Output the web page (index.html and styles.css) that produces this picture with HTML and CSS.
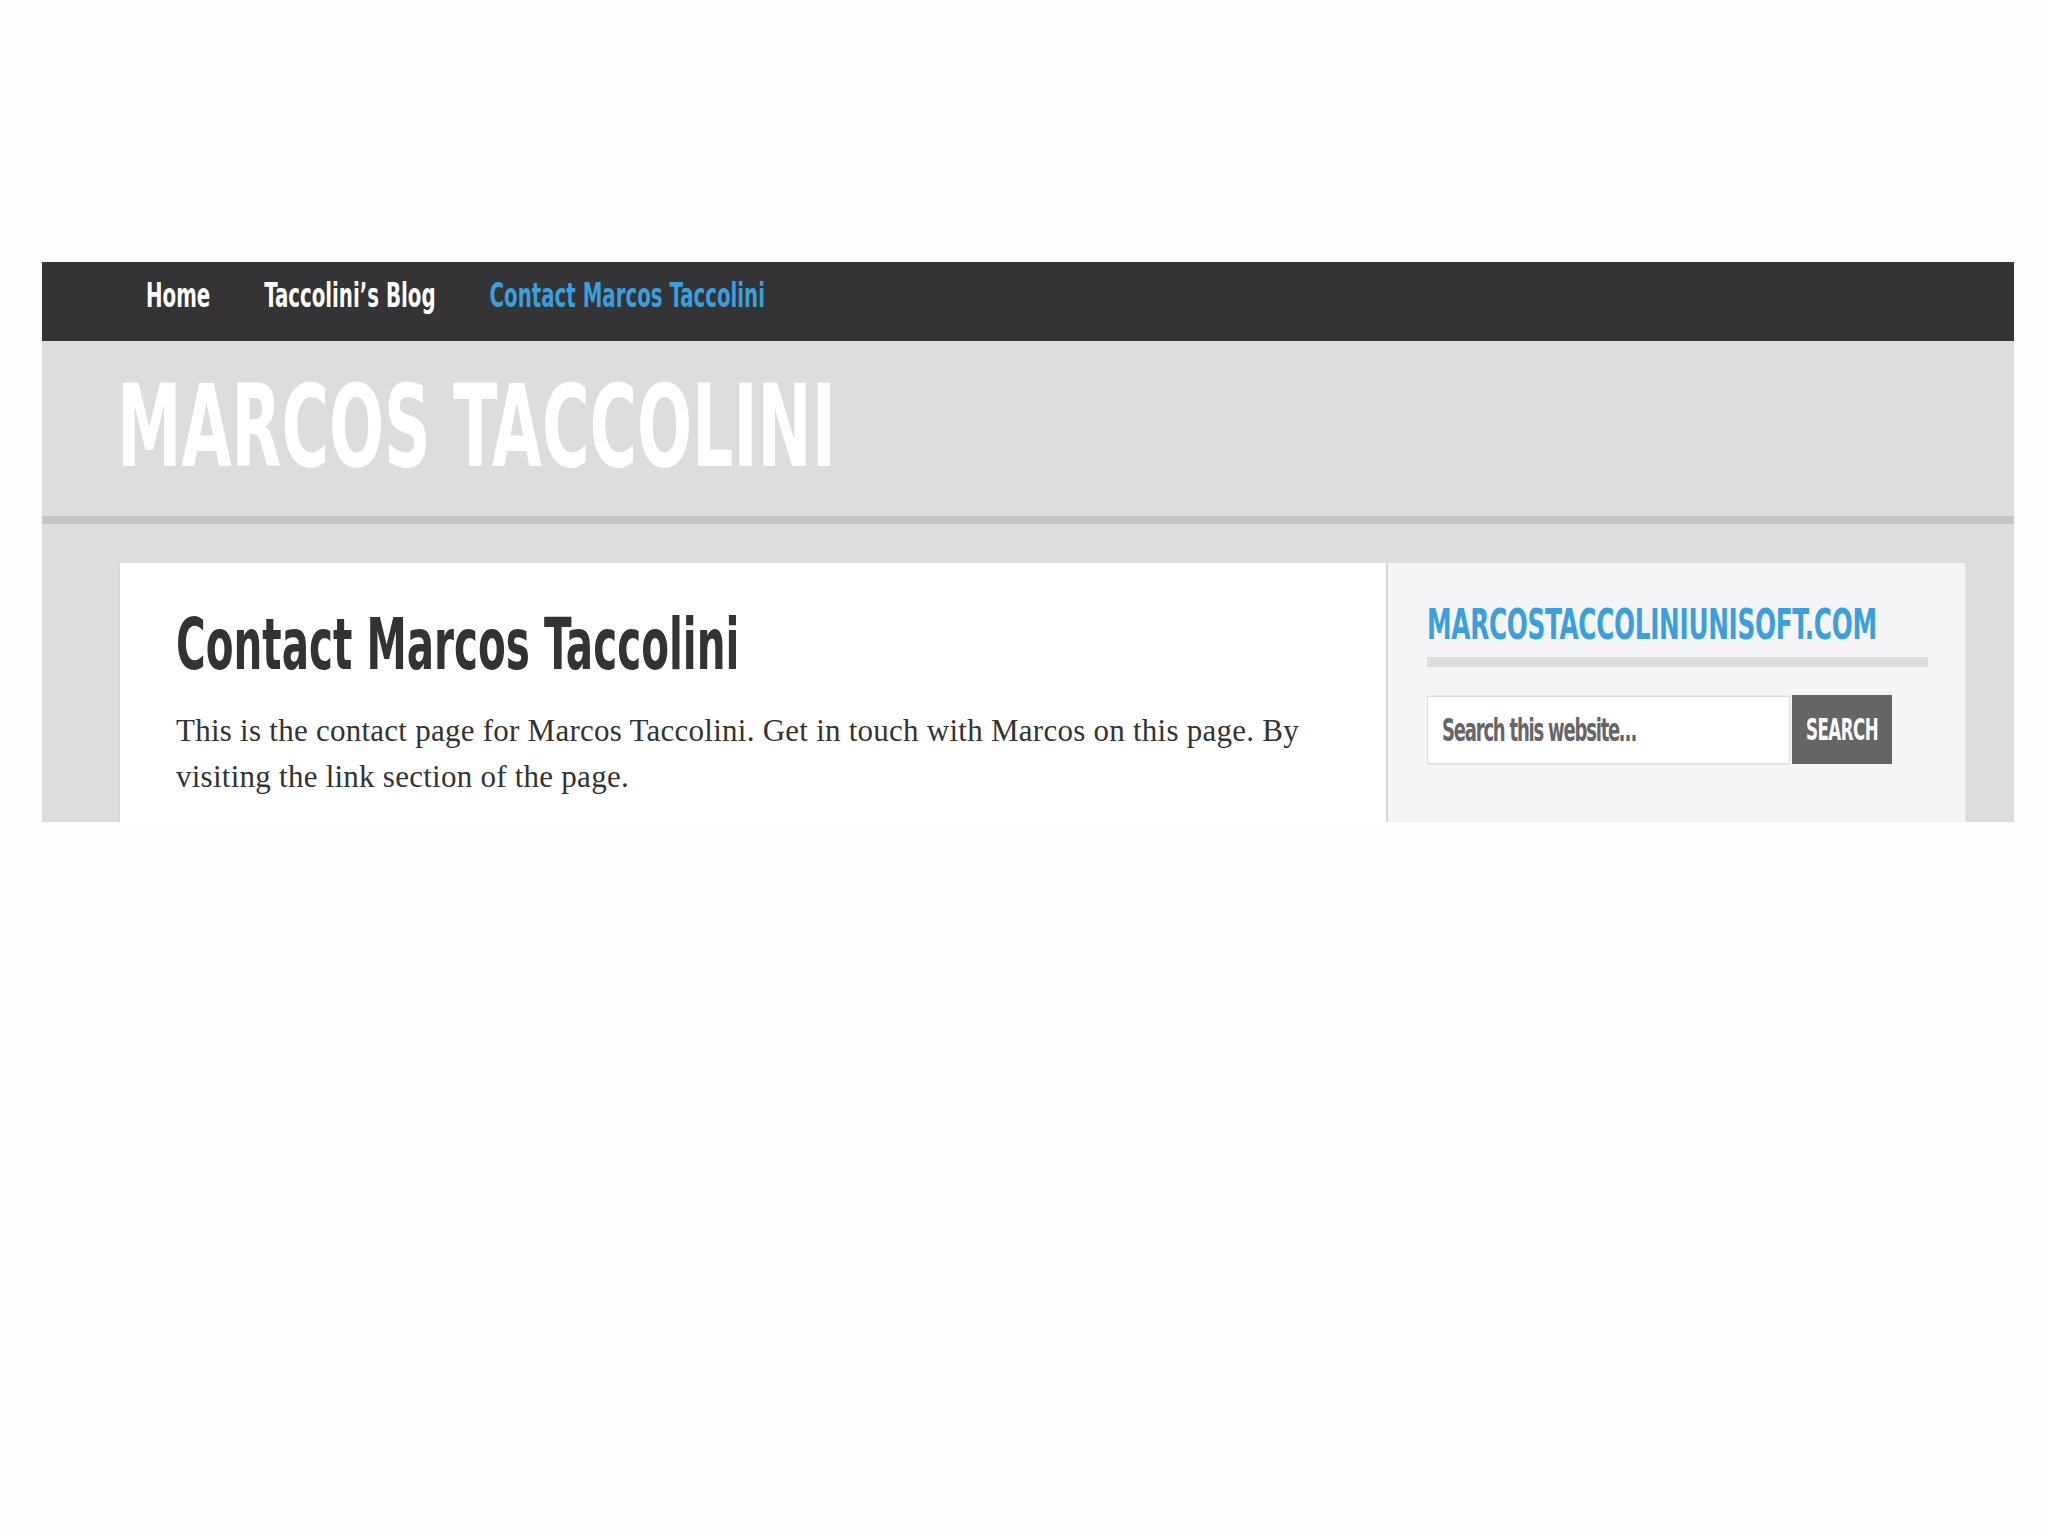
FILE: index.html
```html
<!DOCTYPE html>
<html lang="en">
<head>
    <meta charset="UTF-8">
    <meta name="viewport" content="width=device-width, initial-scale=1.0">
    <title>Contact Marcos Taccolini</title>
    <link rel="stylesheet" href="styles.css">
</head>
<body>
    <div class="site">
        <!-- Primary navigation -->
        <nav class="nav-primary">
            <ul class="menu">
                <li><a href="#"><span>Home</span></a></li>
                <li><a href="#"><span>Taccolini’s Blog</span></a></li>
                <li class="current"><a href="#"><span>Contact Marcos Taccolini</span></a></li>
            </ul>
        </nav>

        <header class="site-header">
            <p class="site-title"><a href="#">Marcos Taccolini</a></p>
        </header>

        <div class="site-inner">
            <main class="content">
                <article class="entry">
                    <h1 class="entry-title"><span>Contact Marcos Taccolini</span></h1>
                    <p>This is the contact page for Marcos Taccolini. Get in touch with Marcos on this page. By visiting the link section of the page.</p>
                </article>
            </main>

            <!-- Sidebar -->
            <aside class="sidebar">
                <section class="widget">
                    <h4 class="widget-title"><span>marcostaccoliniunisoft.com</span></h4>
                    <form class="search-form" onsubmit="return false;">
                        <input type="search" placeholder="Search this website…">
                        <button type="submit"><span>Search</span></button>
                    </form>
                </section>
            </aside>
        </div>
    </div>
</body>
</html>
```

FILE: styles.css
```css
/* Main Styles */
body {
    background-color: #fefefe;
    color: #333;
    font-family: "Liberation Serif", "Times New Roman", serif;
    margin: 0;
}
a {
    color: inherit;
    text-decoration: none;
}
.site {
    margin: 262px 34px 0 42px;
    height: 560px;
    overflow: hidden;
    background-color: #dddcdf;
}

/* Headline font: condensed sans stretched tall */
.menu a span, .site-title a, .entry-title span, .widget-title span, .search-form button span {
    display: inline-block;
    font-family: "Liberation Sans Narrow", "DejaVu Sans Condensed", "Liberation Sans", sans-serif;
    font-weight: bold;
    transform: scaleY(1.56);
}

/* Navigation */
.nav-primary {
    background-color: #343335;
    height: 79px;
    box-sizing: border-box;
    padding: 0 0 12px 104px;
    display: flex;
    align-items: center;
}
.menu {
    list-style: none;
    margin: 0;
    padding: 0;
    display: flex;
    gap: 54px;
}
.menu a {
    color: #fff;
    font-size: 22px;
    line-height: 22px;
}
.menu .current a {
    color: #3a9fdc;
}

/* Header */
.site-header {
    height: 183px;
    box-sizing: border-box;
    padding: 0 0 4px 75px;
    display: flex;
    align-items: center;
    border-bottom: 8px solid #c4c3c6;
}
.site-title {
    margin: 0;
    font-size: 72px;
    line-height: 72px;
    text-transform: uppercase;
}
.site-title a {
    color: #fff;
    transform: scaleY(1.58);
}

/* Content */
.site-inner {
    display: flex;
    padding: 39px 48px 0 77px;
    height: 100%;
}
.content {
    flex: 1;
    background-color: #fff;
    border-left: 1px solid #d4d3d6;
    padding: 53px 60px 0 56px;
}
.entry-title {
    margin: 0 0 34px;
    font-size: 45px;
    line-height: 57px;
    color: #333;
    font-weight: bold;
}
.entry-title span {
    transform: scaleY(1.58);
}
.entry p {
    margin: 0;
    font-size: 31px;
    line-height: 46px;
    letter-spacing: 0.25px;
    color: #333;
}

/* Sidebar */
.sidebar {
    flex: 0 0 580px;
    box-sizing: border-box;
    background-color: #f5f5f7;
    border-left: 2px solid #d6d5d8;
    border-right: 1px solid #e2e1e4;
    padding: 44px 37px 0 39px;
}
.widget-title {
    margin: 0 0 28px;
    padding-bottom: 17px;
    border-bottom: 10px solid #dddcdf;
    font-size: 27.5px;
    line-height: 32px;
    color: #3a9fdc;
    text-transform: uppercase;
}
.widget-title span {
    transform: scaleY(1.56);
    letter-spacing: -0.3px;
}
.search-form {
    display: flex;
    align-items: center;
    gap: 2px;
    height: 69px;
}
.search-form input {
    width: 363px;
    height: 44px;
    box-sizing: border-box;
    border: 1px solid #dddcdf;
    background-color: #fff;
    padding: 0 14px;
    font-family: "Liberation Sans Narrow", "DejaVu Sans Condensed", "Liberation Sans", sans-serif;
    font-weight: bold;
    font-size: 20px;
    letter-spacing: -1.2px;
    color: #666;
    transform: scaleY(1.57);
}
.search-form input::placeholder {
    color: #666;
}
.search-form button {
    width: 100px;
    height: 69px;
    border: none;
    background-color: #666566;
    color: #fff;
    font-size: 18.5px;
    text-transform: uppercase;
    letter-spacing: -0.5px;
    cursor: pointer;
}
.search-form button span {
    transform: scaleY(1.63);
}
```
